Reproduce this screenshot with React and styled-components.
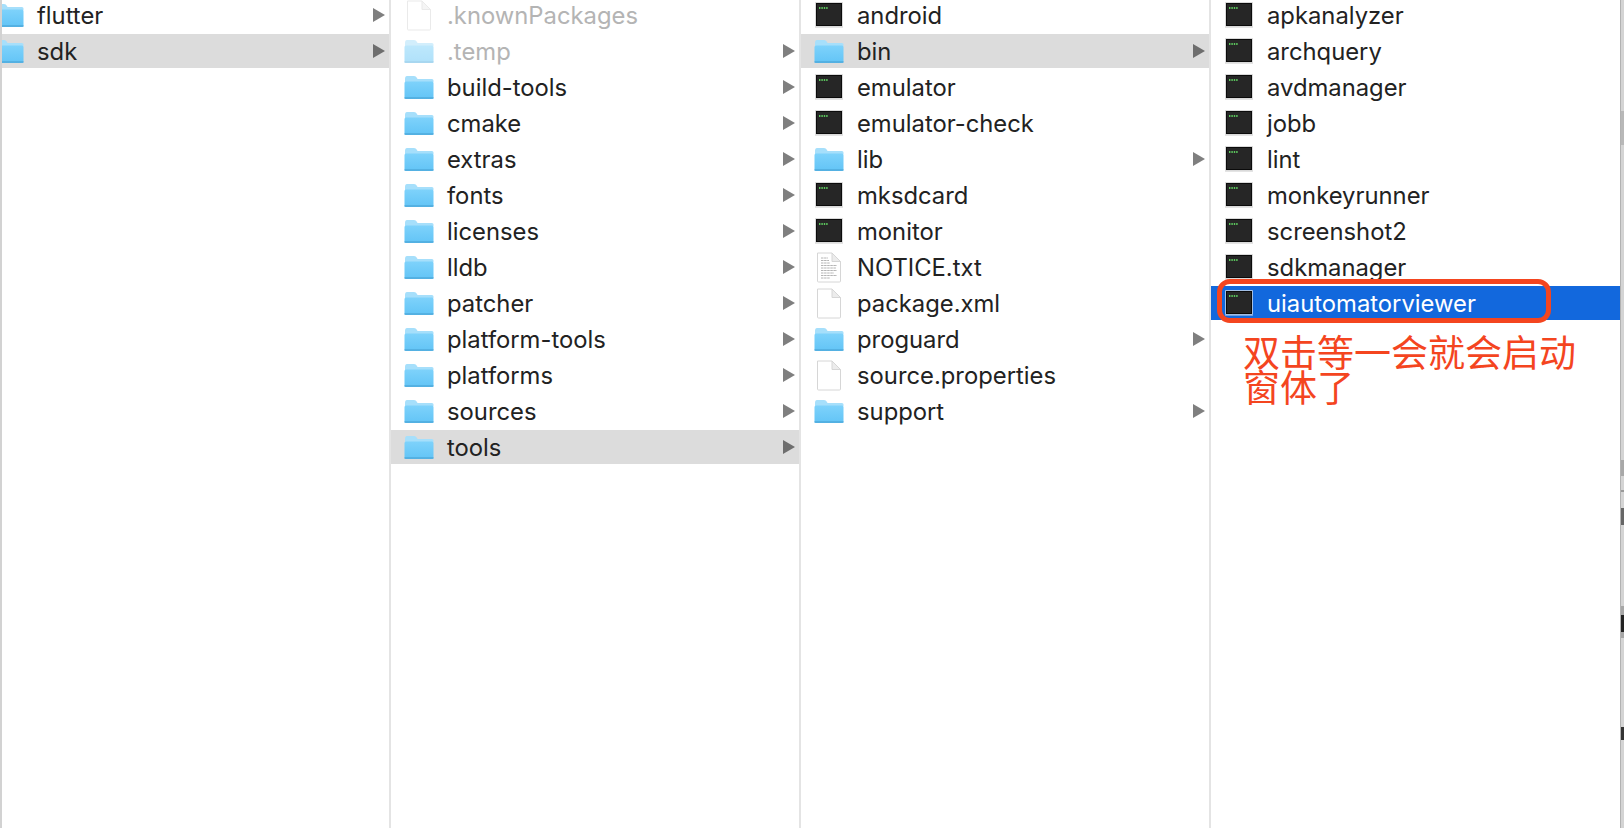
import React from 'react';
import styled, { createGlobalStyle } from 'styled-components';

const GlobalStyle = createGlobalStyle`
  html, body {
    margin: 0;
    padding: 0;
    background: #fff;
  }
`;

const Page = styled.div`
  display: flex;
  width: 1624px;
  height: 828px;
  overflow: hidden;
  background: #fff;
  font-family: Inter, "Liberation Sans", sans-serif;
`;

const LeftRule = styled.div`
  width: 2px;
  flex: none;
  background: #d2d2d2;
`;

const Column = styled.div`
  position: relative;
  flex: none;
  width: ${(p) => p.$width}px;
  display: flex;
  flex-direction: column;
  gap: 2px;
  margin-top: -2px;
  overflow: hidden;
  box-sizing: border-box;
  border-right: ${(p) => (p.$last ? '0' : '2px solid #e4e4e4')};
`;

const Row = styled.div`
  display: flex;
  align-items: center;
  flex: none;
  height: 34px;
  gap: 13px;
  padding: 0 4px 0 ${(p) => (p.$clipped ? 0 : 13)}px;
  background: ${(p) => (p.$state === 'active' ? '#1268dd' : p.$state === 'open' ? '#dcdcdc' : 'transparent')};
  color: ${(p) => (p.$state === 'active' ? '#fff' : p.$dim ? '#b4b4b4' : '#222')};
`;

const IconBox = styled.span`
  flex: none;
  display: flex;
  align-items: center;
  justify-content: center;
  width: 30px;
  height: 32px;
  margin-left: ${(p) => (p.$clipped ? -8 : 0)}px;
  opacity: ${(p) => (p.$dim ? 0.5 : 1)};
`;

const Name = styled.span`
  flex: 1;
  padding-top: 1px;
  font-size: 23.8px;
  line-height: 33px;
  white-space: nowrap;
`;

const Arrow = styled.span`
  flex: none;
  width: 0;
  height: 0;
  border-style: solid;
  border-width: 7px 0 7px 12px;
  border-color: transparent transparent transparent ${(p) => (p.$open ? '#6e6e6e' : '#7f7f7f')};
`;

const Outline = styled.div`
  position: absolute;
  left: 6px;
  top: 281px;
  width: 334px;
  height: 44px;
  box-sizing: border-box;
  border: 5px solid #f4451f;
  border-radius: 13px;
`;

const Note = styled.div`
  margin: 12px 0 0 32px;
  width: 350px;
  font-family: "Noto Sans CJK SC", sans-serif;
  font-size: 37px;
  font-weight: 400;
  line-height: 35px;
  color: #f4451f;
`;

const Edge = styled.div`
  flex: none;
  width: 4px;
  box-sizing: border-box;
  display: flex;
  flex-direction: column;
  background: #d4d4d4;
  border-left: 1px solid #b2b2b2;
`;

const EdgeBand = styled.div`
  flex: none;
  height: ${(p) => p.$h}px;
  background: ${(p) => p.$c};
`;

const FolderIcon = () => (
  <svg width="30" height="26" viewBox="0 0 30 26">
    <defs>
      <linearGradient id="folderBody" x1="0" y1="0" x2="0" y2="1">
        <stop offset="0" stopColor="#7ed2fb" />
        <stop offset="1" stopColor="#62c4f6" />
      </linearGradient>
    </defs>
    <path d="M1 5 Q1 2 3 2 H10 Q12 2 13 4 L13.5 5 H28 Q29.5 5 29.5 6.5 V8 H1 Z" fill="#a6dffb" />
    <path d="M0.5 9 Q0.5 7.5 2 7.5 H28 Q29.5 7.5 29.5 9 V23.5 Q29.5 25 28 25 H2 Q0.5 25 0.5 23.5 Z" fill="url(#folderBody)" />
    <path d="M0.5 24 H29.5" stroke="#4aa3d6" strokeWidth="1.2" />
  </svg>
);

const TerminalIcon = ({ active }) => (
  <svg width="28" height="26" viewBox="0 0 28 26">
    <rect x="0" y="0" width="28" height="26" fill={active ? '#6f9fe0' : '#e4e4e4'} />
    <rect x="0.5" y="0.5" width="27" height="24" fill={active ? '#d6dde8' : '#cfcfcf'} />
    <rect x="1.5" y="1.5" width="25" height="22" fill="#262626" stroke="#0b0b0b" strokeWidth="1" />
    <path d="M4 6 H5.4 M6.4 6 H7.8 M8.8 6 H10.2 M11.2 6 H12.6" stroke="#5cc65e" strokeWidth="1.8" />
  </svg>
);

const FileIcon = ({ lines }) => (
  <svg width="26" height="31" viewBox="0 0 26 31">
    <path d="M1.5 1 H16 L24.5 9.5 V29 Q24.5 30 23.5 30 H2.5 Q1.5 30 1.5 29 Z" fill="#fff" stroke="#d6d6d6" strokeWidth="1" />
    <path d="M16 1 V9.5 H24.5 Z" fill="#ececec" stroke="#d6d6d6" strokeWidth="1" />
    {lines && (
      <path
        d="M5 6 H12 M5 8.500 H13 M5 11 H14 M5 13.500 H21 M5 16 H20 M5 18.500 H21 M5 21 H18 M5 23.500 H21 M5 26 H14"
        stroke="#b4b4b4"
        strokeWidth="1"
        strokeDasharray="2.500 0.600"
      />
    )}
  </svg>
);

const icons = {
  folder: () => <FolderIcon />,
  term: (active) => <TerminalIcon active={active} />,
  file: () => <FileIcon />,
  text: () => <FileIcon lines />,
};

const columns = [
  {
    width: 389,
    clipped: true,
    items: [
      { name: 'flutter', icon: 'folder', more: true },
      { name: 'sdk', icon: 'folder', more: true, state: 'open' },
    ],
  },
  {
    width: 410,
    items: [
      { name: '.knownPackages', icon: 'file', dim: true },
      { name: '.temp', icon: 'folder', dim: true, more: true },
      { name: 'build-tools', icon: 'folder', more: true },
      { name: 'cmake', icon: 'folder', more: true },
      { name: 'extras', icon: 'folder', more: true },
      { name: 'fonts', icon: 'folder', more: true },
      { name: 'licenses', icon: 'folder', more: true },
      { name: 'lldb', icon: 'folder', more: true },
      { name: 'patcher', icon: 'folder', more: true },
      { name: 'platform-tools', icon: 'folder', more: true },
      { name: 'platforms', icon: 'folder', more: true },
      { name: 'sources', icon: 'folder', more: true },
      { name: 'tools', icon: 'folder', more: true, state: 'open' },
    ],
  },
  {
    width: 410,
    items: [
      { name: 'android', icon: 'term' },
      { name: 'bin', icon: 'folder', more: true, state: 'open' },
      { name: 'emulator', icon: 'term' },
      { name: 'emulator-check', icon: 'term' },
      { name: 'lib', icon: 'folder', more: true },
      { name: 'mksdcard', icon: 'term' },
      { name: 'monitor', icon: 'term' },
      { name: 'NOTICE.txt', icon: 'text' },
      { name: 'package.xml', icon: 'file' },
      { name: 'proguard', icon: 'folder', more: true },
      { name: 'source.properties', icon: 'file' },
      { name: 'support', icon: 'folder', more: true },
    ],
  },
  {
    width: 409,
    last: true,
    items: [
      { name: 'apkanalyzer', icon: 'term' },
      { name: 'archquery', icon: 'term' },
      { name: 'avdmanager', icon: 'term' },
      { name: 'jobb', icon: 'term' },
      { name: 'lint', icon: 'term' },
      { name: 'monkeyrunner', icon: 'term' },
      { name: 'screenshot2', icon: 'term' },
      { name: 'sdkmanager', icon: 'term' },
      { name: 'uiautomatorviewer', icon: 'term', state: 'active' },
    ],
  },
];

// scrollbar-ish strip of the window behind, cut off at the right edge
const edgeBands = [
  [111, 'transparent'],
  [34, '#b8b8b8'],
  [315, 'transparent'],
  [16, '#a8a8a8'],
  [14, 'transparent'],
  [2, '#9a9a9a'],
  [16, 'transparent'],
  [17, '#666'],
  [81, 'transparent'],
  [9, '#a6a6a6'],
  [17, '#222'],
  [6, '#a6a6a6'],
  [89, 'transparent'],
  [13, '#333'],
];

const App = () => (
  <Page>
    <GlobalStyle />
    <LeftRule />
    {columns.map((col) => (
      <Column key={col.items[0].name} $width={col.width} $last={col.last}>
        {col.items.map((item) => (
          <Row key={item.name} $state={item.state} $dim={item.dim} $clipped={col.clipped}>
            <IconBox $clipped={col.clipped} $dim={item.dim}>
              {icons[item.icon](item.state === 'active')}
            </IconBox>
            <Name>{item.name}</Name>
            {item.more && <Arrow $open={item.state === 'open'} />}
          </Row>
        ))}
        {col.last && (
          <>
            <Outline />
            <Note>双击等一会就会启动窗体了</Note>
          </>
        )}
      </Column>
    ))}
    <Edge>
      {edgeBands.map(([h, c], i) => (
        <EdgeBand key={i} $h={h} $c={c} />
      ))}
    </Edge>
  </Page>
);

export default App;
